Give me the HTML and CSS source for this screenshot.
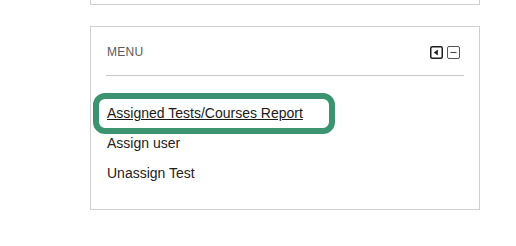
FILE: index.html
```html
<!DOCTYPE html>
<html lang="en">
<head>
    <meta charset="UTF-8">
    <meta name="viewport" content="width=device-width, initial-scale=1.0">
    <title>Menu</title>
    <link rel="stylesheet" href="styles.css">
</head>
<body>
    <div class="page">
        <div class="block block-above"></div>

        <div class="block">
            <div class="block-header">
                <span class="block-title">MENU</span>
                <span class="block-controls">
                    <!-- dock / move left -->
                    <svg class="ctrl" width="13" height="13" viewBox="0 0 13 13">
                        <rect x="0.75" y="0.75" width="11.5" height="11.5" rx="1.5" fill="#fff" stroke="#1e1e1e" stroke-width="1.5"/>
                        <path d="M3.8 6.5 L7.8 3.4 L7.8 9.6 Z" fill="#1e1e1e"/>
                    </svg>
                    <!-- collapse -->
                    <svg class="ctrl" width="13" height="13" viewBox="0 0 13 13">
                        <rect x="0.5" y="0.5" width="12" height="12" rx="1.5" fill="#fff" stroke="#555" stroke-width="1"/>
                        <path d="M3.5 6.5 H9.5" stroke="#444" stroke-width="1.1"/>
                    </svg>
                </span>
            </div>
            <ul class="menu-list">
                <li class="menu-item highlighted"><a href="#">Assigned Tests/Courses Report</a></li>
                <li class="menu-item">Assign user</li>
                <li class="menu-item">Unassign Test</li>
            </ul>
        </div>
    </div>
</body>
</html>
```

FILE: styles.css
```css
body {
    margin: 0;
    padding: 0;
    background-color: #fff;
    font-family: 'Liberation Sans', Arial, sans-serif;
    color: #222;
}

.page {
    padding-left: 90px;
}

/* Moodle-like side block */
.block {
    width: 358px;
    border: 1px solid #cfcfcf;
    background-color: #fff;
    padding: 0 15px 26px;
}

/* Only the bottom of the previous block shows */
.block-above {
    width: 388px;
    height: 4px;
    padding: 0;
    border-top: none;
    margin-bottom: 21px;
}

.block-header {
    display: flex;
    align-items: center;
    justify-content: space-between;
    padding: 17px 1px 15px 1px;
    border-bottom: 1px solid #c8c8c8;
    line-height: 16px;
}

.block-title {
    font-size: 12px;
    color: #5a5a5a;
    letter-spacing: 0.3px;
}

.block-controls {
    display: flex;
    gap: 4px;
    margin-right: 3px;
}

.ctrl {
    display: block;
}

.menu-list {
    list-style: none;
    margin: 27px 0 0;
    padding: 0;
}

.menu-item {
    font-size: 14px;
    line-height: 20px;
    margin-bottom: 10px;
    padding-left: 1px;
}

.menu-item:last-child {
    margin-bottom: 0;
}

.menu-item a {
    color: #1a1a1a;
    text-decoration: underline;
}

.highlighted {
    position: relative;
}

/* Annotation box drawn over the first link */
.highlighted::after {
    content: '';
    position: absolute;
    left: -13px;
    top: -10px;
    width: 242px;
    height: 41px;
    box-sizing: border-box;
    border: 6px solid #3b9370;
    border-radius: 12px;
    pointer-events: none;
}
```
